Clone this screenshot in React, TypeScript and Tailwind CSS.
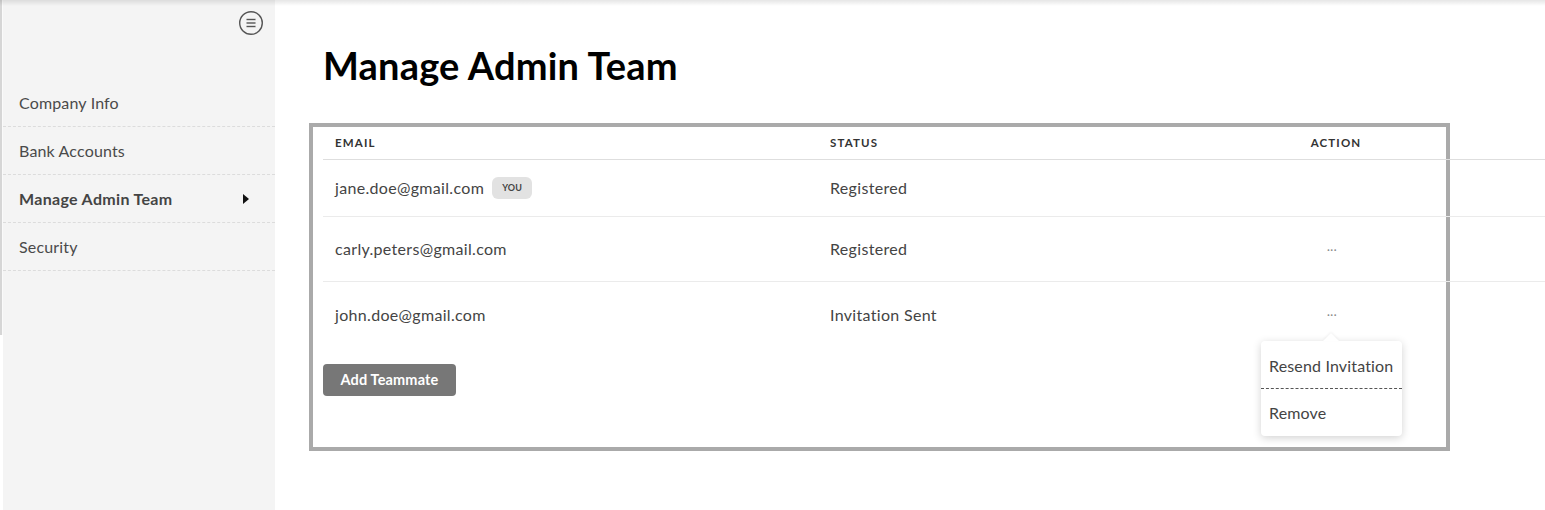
import { useState } from "react";

const navItems = ["Company Info", "Bank Accounts", "Manage Admin Team", "Security"];

const members = [
  { email: "jane.doe@gmail.com", status: "Registered", you: true, h: "h-[57px]" },
  { email: "carly.peters@gmail.com", status: "Registered", you: false, h: "h-[65px]" },
  { email: "john.doe@gmail.com", status: "Invitation Sent", you: false, h: "h-[65px]" },
];

const MenuIcon = () => (
  <svg width="26" height="26" viewBox="0 0 26 26" fill="none" stroke="#555" strokeWidth="1.4">
    <circle cx="13" cy="13" r="11.3" />
    <line x1="8.5" y1="9.5" x2="17.5" y2="9.5" />
    <line x1="8.5" y1="13" x2="17.5" y2="13" />
    <line x1="8.5" y1="16.5" x2="17.5" y2="16.5" />
  </svg>
);

export default function App() {
  const [active] = useState("Manage Admin Team");

  return (
    <div
      className="relative flex h-[510px] w-[1545px] overflow-hidden bg-white text-[#444]"
      style={{ fontFamily: "Lato, 'Noto Sans', sans-serif" }}
    >
      {/* top shade */}
      <div className="pointer-events-none absolute inset-x-0 top-0 h-[6px] bg-gradient-to-b from-black/10 to-transparent" />

      {/* Sidebar */}
      <aside className="flex w-[275px] shrink-0">
        <div className="flex w-[3px] flex-col">
          <div className="h-[335px] border-l-2 border-[#d6d6d6] bg-[#fafafa]" />
        </div>
        <div className="flex flex-1 flex-col bg-[#f4f4f4]">
          <div className="flex h-[79px] justify-end pr-[11px] pt-[10px]">
            <MenuIcon />
          </div>
          <nav className="flex flex-col">
            {navItems.map((item) => (
              <div
                key={item}
                className={`flex h-[48px] items-center justify-between border-b border-dashed border-[#dcdcdc] pl-4 pr-[26px] text-[16px] ${
                  item === active ? "font-bold tracking-[0.02em] text-[#444]" : "tracking-[0.01em] text-[#4a4a4a]"
                }`}
              >
                <span>{item}</span>
                {item === active && (
                  <svg width="6" height="10" viewBox="0 0 6 10">
                    <path d="M0 0 L6 5 L0 10 Z" fill="#111" />
                  </svg>
                )}
              </div>
            ))}
          </nav>
        </div>
      </aside>

      {/* Main */}
      <main className="flex flex-1 flex-col pl-[34px] pt-[43px]">
        <h1 className="pl-[14px] text-[38px] font-bold leading-[45px] tracking-[0.005em] text-black">
          Manage Admin Team
        </h1>

        <div className="mt-[35px] h-[328px] w-[1141px] border-4 border-[#aaaaaa] pl-[10px]">
          <div className="w-[1222px]">
            {/* Header */}
            <div className="grid h-[33px] grid-cols-[495px_408px_220px_1fr] items-center border-b border-[#dedede] text-[11.5px] font-bold tracking-[0.1em] text-[#333]">
              <span className="pl-3">EMAIL</span>
              <span className="pl-3">STATUS</span>
              <span className="text-center">ACTION</span>
              <span />
            </div>

            {members.map((m, i) => (
              <div
                key={m.email}
                className={`grid ${m.h} grid-cols-[495px_408px_220px_1fr] items-center text-[16px] tracking-[0.02em] ${
                  i < members.length - 1 ? "border-b border-[#ebebeb]" : ""
                }`}
              >
                <span className="flex items-center gap-2 pl-3">
                  {m.email}
                  {m.you && (
                    <span className="rounded-md bg-[#e2e2e2] px-[10px] py-[5px] text-[9px] font-bold leading-[12px] tracking-wide text-[#444]">
                      YOU
                    </span>
                  )}
                </span>
                <span className="pl-3">{m.status}</span>
                <span className="relative flex justify-center">
                  {!m.you && (
                    <span className="pr-[8px] text-[11px] leading-none tracking-[0.05em] text-[#888]">···</span>
                  )}
                  {i === members.length - 1 && (
                    <div className="absolute left-[35px] top-[24px] z-10 w-[141px]">
                      <div className="ml-[62px] h-0 w-0 border-x-[8px] border-b-[8px] border-x-transparent border-b-white drop-shadow-[0_-1px_1px_rgba(0,0,0,0.06)]" />
                      <div className="rounded bg-white shadow-[0_2px_8px_rgba(0,0,0,0.18)]">
                        <div className="flex h-[48px] items-center border-b border-dashed border-[#555] px-2 pt-[2px] text-[16px] tracking-[0.01em]">
                          Resend Invitation
                        </div>
                        <div className="flex h-[47px] items-center px-2 text-[16px] tracking-[0.01em]">Remove</div>
                      </div>
                    </div>
                  )}
                </span>
                <span />
              </div>
            ))}

            <button className="mt-[17px] h-[32px] w-[133px] rounded bg-[#777777] text-[14.5px] font-bold tracking-[0.01em] text-white">
              Add Teammate
            </button>
          </div>
        </div>
      </main>
    </div>
  );
}
